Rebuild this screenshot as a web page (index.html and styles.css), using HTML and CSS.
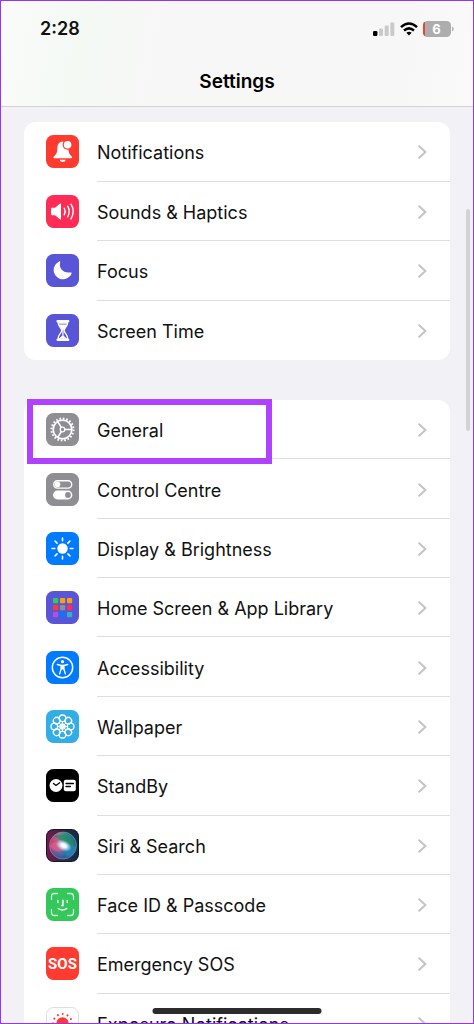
FILE: index.html
```html
<!DOCTYPE html>
<html lang="en-GB">
<head>
<meta charset="utf-8">
<meta name="viewport" content="width=device-width, initial-scale=1">
<title>Settings</title>
<link rel="stylesheet" href="styles.css">
</head>
<body>
<div class="screen">
  <header class="top">
    <div class="status">
      <time class="clock">2:28</time>
      <div class="indicators">
        <svg width="22" height="14" viewBox="0 0 22 14" role="img" aria-label="Signal"><rect x="0" y="9" width="4.4" height="5" rx="1.2" fill="#000"/><g fill="#cacaca"><rect x="6" y="6.500" width="4" height="7.500" rx="1"/><rect x="11.700" y="3.500" width="4" height="10.500" rx="1"/><rect x="17.300" y="0.500" width="4" height="13.500" rx="1"/></g></svg>
        <svg width="18" height="14" viewBox="0 0 18 14" role="img" aria-label="Wi-Fi"><g fill="none" stroke="#000" stroke-width="2.500"><path d="M1 5.200Q9-2.200 17 5.200"/><path d="M4 8.500Q9 4.200 14 8.500"/></g><path d="M6.400 10.800Q9 8.700 11.600 10.800L9 13.600Z"/></svg>
        <svg width="31" height="16" viewBox="0 0 31 16" role="img" aria-label="Battery 6 percent"><defs><clipPath id="bat"><rect width="28" height="16" rx="4.500"/></clipPath></defs><g clip-path="url(#bat)"><rect width="28" height="16" fill="#adadad"/><rect width="2" height="16" fill="#ff3b30"/></g><path d="M29 5.500q1.800 .6 1.800 2.500T29 10.500Z" fill="#b5b5b5"/><text x="13.500" y="12.500" class="battery-level">6</text></svg>
      </div>
    </div>
    <h1 class="title">Settings</h1>
  </header>
  <main class="content">
    <ul class="group group-alerts">
      <li class="row"><a class="link" href="#notifications">
        <svg class="icon" viewBox="0 0 33 33"><rect width="33" height="33" rx="7.500" fill="#ff3b30"/><path d="M17 6.500c-4 0-5.700 3-5.700 6.600 0 5-1.300 6.600-3.400 8.400-.8.700-.7 1.800.4 1.800h17c1 0 1.100-1.100.4-1.800-2-1.800-3.200-3.400-3.300-8.400Z" fill="#fff"/><circle cx="21.600" cy="9.700" r="5" fill="#ff3b30"/><circle cx="21.600" cy="9.700" r="3.800" fill="#fff"/><path d="M13.600 24.800h6.200q-.5 2.300-3.100 2.300t-3.100-2.300Z" fill="#fff"/></svg>
        <span class="label"><span class="name">Notifications</span><svg class="chevron" viewBox="0 0 9 14"><path d="M1.200 1.200 7.400 7l-6.200 5.800"/></svg></span></a></li>
      <li class="row"><a class="link" href="#sounds">
        <svg class="icon" viewBox="0 0 33 33"><rect width="33" height="33" rx="7.500" fill="#ff2d55"/><path d="M5 13.700q0-.9 1-.9h3l4.800-4q1.200-.9 1.200.5v14.400q0 1.400-1.200.5l-4.800-4H6q-1 0-1-.9Z" fill="#fff"/><g fill="none" stroke="#fff" stroke-width="1.400" stroke-linecap="round"><path d="M18.300 13.200q1.700 3.300 0 6.600M21.700 11.200q3 5.300 0 10.600M25 9.200q4.500 7.300 0 14.600"/></g></svg>
        <span class="label"><span class="name">Sounds &amp; Haptics</span><svg class="chevron" viewBox="0 0 9 14"><path d="M1.200 1.200 7.400 7l-6.200 5.800"/></svg></span></a></li>
      <li class="row"><a class="link" href="#focus">
        <svg class="icon" viewBox="0 0 33 33"><rect width="33" height="33" rx="7.500" fill="#5856d6"/><path d="M14.200 8c-1.600 5.500 2.200 11.500 10.500 10.500.7-.1 1.100.3.900.9A9.300 9.300 0 1 1 13.300 7.400c.7-.3 1.100 0 .9.600Z" fill="#fff"/></svg>
        <span class="label"><span class="name">Focus</span><svg class="chevron" viewBox="0 0 9 14"><path d="M1.200 1.200 7.400 7l-6.200 5.800"/></svg></span></a></li>
      <li class="row"><a class="link" href="#screen-time">
        <svg class="icon" viewBox="0 0 33 33"><rect width="33" height="33" rx="7.500" fill="#5856d6"/><path d="M11.500 7.200h10.800M11.500 25.800h10.800" stroke="#fff" stroke-width="2.200" stroke-linecap="round"/><path d="M12 8c0 4.800 3.700 6 3.700 8.500S12 20.200 12 25h9.800c0-4.800-3.700-6-3.700-8.500s3.700-3.700 3.700-8.500Z" fill="none" stroke="#fff" stroke-width="1.300"/><path d="M12.500 10.800h8.800c-.9 2.500-2.800 3.300-3.500 5H16c-.7-1.700-2.600-2.500-3.500-5ZM13.200 24.500l3.700-3.500 3.700 3.500ZM16.300 15h1.200v7h-1.200Z" fill="#fff"/><path d="M12.600 8h8.600v2.500h-8.600Z" fill="#fff" opacity=".75"/></svg>
        <span class="label"><span class="name">Screen Time</span><svg class="chevron" viewBox="0 0 9 14"><path d="M1.200 1.200 7.400 7l-6.200 5.800"/></svg></span></a></li>
    </ul>
    <ul class="group group-system">
      <li class="row highlighted"><a class="link" href="#general">
        <svg class="icon" viewBox="0 0 33 33"><rect width="33" height="33" rx="7.500" fill="#8e8e93"/><g fill="none" stroke="#fff"><circle cx="16.500" cy="16.500" r="11" stroke-width="2" stroke-dasharray="1.640 1.816"/><circle cx="16.500" cy="16.500" r="9.300" stroke-width="1.700"/><circle cx="16.500" cy="16.500" r="2.300" stroke-width="1.300"/><path d="M18.800 16.500h7M15.300 14.500 11.600 8.400M15.300 18.500l-3.700 6.100" stroke-width="1.500"/></g></svg>
        <span class="label"><span class="name">General</span><svg class="chevron" viewBox="0 0 9 14"><path d="M1.200 1.200 7.400 7l-6.200 5.800"/></svg></span></a></li>
      <li class="row"><a class="link" href="#control-centre">
        <svg class="icon" viewBox="0 0 33 33"><rect width="33" height="33" rx="7.500" fill="#8e8e93"/><rect x="7.700" y="7.700" width="18" height="7.400" rx="3.700" fill="none" stroke="#fff" stroke-width="1.400"/><circle cx="11.500" cy="11.400" r="2.800" fill="#fff"/><rect x="7" y="17.600" width="19.400" height="8.800" rx="4.400" fill="#fff"/><circle cx="22" cy="22" r="2.900" fill="#8e8e93"/></svg>
        <span class="label"><span class="name">Control Centre</span><svg class="chevron" viewBox="0 0 9 14"><path d="M1.200 1.200 7.400 7l-6.200 5.800"/></svg></span></a></li>
      <li class="row"><a class="link" href="#display">
        <svg class="icon" viewBox="0 0 33 33"><rect width="33" height="33" rx="7.500" fill="#007aff"/><circle cx="16.500" cy="16.500" r="5.200" fill="#fff"/><path d="M16.500 6v2.800M16.500 24.200V27M6 16.500h2.800M24.200 16.500H27M9.100 9.100l2 2M21.900 21.900l2 2M9.100 23.900l2-2M21.900 11.100l2-2" stroke="#fff" stroke-width="1.600" stroke-linecap="round"/></svg>
        <span class="label"><span class="name">Display &amp; Brightness</span><svg class="chevron" viewBox="0 0 9 14"><path d="M1.200 1.200 7.400 7l-6.200 5.800"/></svg></span></a></li>
      <li class="row"><a class="link" href="#home-screen">
        <svg class="icon" viewBox="0 0 33 33"><rect width="33" height="33" rx="7.500" fill="#5856d6"/><rect x="7" y="7" width="5.200" height="5.200" rx="1" fill="#34c759"/><rect x="14" y="7" width="5.200" height="5.200" rx="1" fill="#ff9f0a"/><rect x="21" y="7" width="5.200" height="5.200" rx="1" fill="#ff9f0a"/><rect x="7" y="14" width="5.200" height="5.200" rx="1" fill="#ff3b30"/><rect x="14" y="14" width="5.200" height="5.200" rx="1" fill="#8e8e93"/><rect x="21" y="14" width="5.200" height="5.200" rx="1" fill="#ff2d55"/><rect x="7" y="21" width="5.200" height="5.200" rx="1" fill="#af52de"/><rect x="14" y="21" width="5.200" height="5.200" rx="1" fill="#007aff"/><rect x="21" y="21" width="5.200" height="5.200" rx="1" fill="#30b0c7"/></svg>
        <span class="label"><span class="name">Home Screen &amp; App Library</span><svg class="chevron" viewBox="0 0 9 14"><path d="M1.200 1.200 7.400 7l-6.200 5.800"/></svg></span></a></li>
      <li class="row"><a class="link" href="#accessibility">
        <svg class="icon" viewBox="0 0 33 33"><rect width="33" height="33" rx="7.500" fill="#007aff"/><circle cx="16.500" cy="16.500" r="10.200" fill="none" stroke="#fff" stroke-width="1.500"/><circle cx="16.500" cy="10.700" r="1.600" fill="#fff"/><path d="M11.300 13.500l3.900 1v3.200L13.600 23M21.700 13.500l-3.900 1v3.200l1.600 5.300" fill="none" stroke="#fff" stroke-width="1.300" stroke-linecap="round" stroke-linejoin="round"/><path d="M14.700 13.800h3.600v4.700h-3.600Z" fill="#fff"/></svg>
        <span class="label"><span class="name">Accessibility</span><svg class="chevron" viewBox="0 0 9 14"><path d="M1.200 1.200 7.400 7l-6.200 5.800"/></svg></span></a></li>
      <li class="row"><a class="link" href="#wallpaper">
        <svg class="icon" viewBox="0 0 33 33"><rect width="33" height="33" rx="7.500" fill="#32ade6"/><g fill="none" stroke="#fff" stroke-width="1.300"><g id="petals"><circle cx="16.500" cy="8.300" r="3.300"/><circle cx="16.500" cy="24.700" r="3.300"/><circle cx="8.300" cy="16.500" r="3.300"/><circle cx="24.700" cy="16.500" r="3.300"/></g><use href="#petals" transform="rotate(45 16.500 16.500)"/><circle cx="16.500" cy="16.500" r="2.600"/><path d="M16.500 11.800v9.400M11.800 16.500h9.400M13.200 13.200l6.600 6.600M19.800 13.200l-6.600 6.600" stroke-width="1"/></g></svg>
        <span class="label"><span class="name">Wallpaper</span><svg class="chevron" viewBox="0 0 9 14"><path d="M1.200 1.200 7.400 7l-6.200 5.800"/></svg></span></a></li>
      <li class="row"><a class="link" href="#standby">
        <svg class="icon" viewBox="0 0 33 33"><rect width="33" height="33" rx="7.500"/><circle cx="10" cy="16.500" r="6.500" fill="#fff"/><rect x="17.800" y="10.700" width="12" height="11.600" rx="2" fill="#fff"/><path d="M7.500 14.500l2.500 2 3.600-2.800M20 14.500h7.400M20 17.500h4.500" fill="none" stroke="#000" stroke-width="1.300" stroke-linecap="round"/></svg>
        <span class="label"><span class="name">StandBy</span><svg class="chevron" viewBox="0 0 9 14"><path d="M1.200 1.200 7.400 7l-6.200 5.800"/></svg></span></a></li>
      <li class="row"><a class="link" href="#siri">
        <svg class="icon" viewBox="0 0 33 33"><defs><linearGradient id="siri-back"><stop offset="0" stop-color="#7a174c"/><stop offset=".45" stop-color="#392744"/><stop offset="1" stop-color="#102b45"/></linearGradient><linearGradient id="siri-orb" x1="0" y1=".6" x2="1" y2=".5"><stop offset="0" stop-color="#d72d69"/><stop offset=".4" stop-color="#a77690"/><stop offset=".6" stop-color="#328f85"/><stop offset="1" stop-color="#1e6c80"/></linearGradient><linearGradient id="siri-low" x2="0" y2="1"><stop offset=".5" stop-color="#2270bd" stop-opacity="0"/><stop offset="1" stop-color="#2254a3"/></linearGradient><radialGradient id="siri-glow"><stop offset="0" stop-color="#fff"/><stop offset=".35" stop-color="#eaf6ff"/><stop offset="1" stop-color="#b2e0f4" stop-opacity="0"/></radialGradient></defs><rect width="33" height="33" rx="7.500" fill="#17172a"/><rect x="1" y="1" width="31" height="31" rx="6.500" fill="url(#siri-back)"/><circle cx="17" cy="16.500" r="13.500" fill="url(#siri-orb)"/><circle cx="17" cy="16.500" r="13.500" fill="url(#siri-low)"/><path d="M8 7q16-5 21 11Q17 14 8 7Z" fill="#238a67" opacity=".7"/><path d="M4 17q3-7 13-1l3 4Q9 26 4 17Z" fill="#ed5f8c" opacity=".6"/><path d="M17 17q7-3 13 1-2 9-9 10Z" fill="#2a86c4" opacity=".6"/><circle cx="17" cy="16.500" r="13.500" fill="none" stroke="#6d9ba7" stroke-width=".7"/><ellipse cx="17.500" cy="16.800" rx="8.500" ry="5.500" transform="rotate(25 18 17)" fill="url(#siri-glow)"/></svg>
        <span class="label"><span class="name">Siri &amp; Search</span><svg class="chevron" viewBox="0 0 9 14"><path d="M1.200 1.200 7.400 7l-6.200 5.800"/></svg></span></a></li>
      <li class="row"><a class="link" href="#face-id">
        <svg class="icon" viewBox="0 0 33 33"><rect width="33" height="33" rx="7.500" fill="#34c759"/><g fill="none" stroke="#fff" stroke-linecap="round"><path d="M5.500 11.500V8.500q0-3 3-3h3M21.500 5.500h3q3 0 3 3v3M27.500 21.500v3q0 3-3 3h-3M11.500 27.500h-3q-3 0-3-3v-3" stroke-width="1.300" opacity=".8"/><path d="M11.800 12.500v2M21.300 12.500v2M16.900 12.300v5.200h-1.300M12.300 20.500q4.200 3.200 8.400 0" stroke-width="1.500"/></g></svg>
        <span class="label"><span class="name">Face ID &amp; Passcode</span><svg class="chevron" viewBox="0 0 9 14"><path d="M1.200 1.200 7.400 7l-6.200 5.800"/></svg></span></a></li>
      <li class="row"><a class="link" href="#sos">
        <svg class="icon" viewBox="0 0 33 33"><rect width="33" height="33" rx="7.500" fill="#ff3b30"/><text x="16.500" y="22" class="sos">SOS</text></svg>
        <span class="label"><span class="name">Emergency SOS</span><svg class="chevron" viewBox="0 0 9 14"><path d="M1.200 1.200 7.400 7l-6.200 5.800"/></svg></span></a></li>
      <li class="row"><a class="link" href="#exposure">
        <svg class="icon" viewBox="0 0 33 33"><rect x=".5" y=".5" width="32" height="32" rx="7" fill="#fff" stroke="#dedee0"/><circle cx="16.500" cy="16.500" r="6.200" fill="#ff3b30"/><circle cx="16.500" cy="16.500" r="9.500" fill="none" stroke="#ff3b30" stroke-width="2" stroke-linecap="round" stroke-dasharray="0.010 4.960"/></svg>
        <span class="label"><span class="name">Exposure Notifications</span><svg class="chevron" viewBox="0 0 9 14"><path d="M1.200 1.200 7.400 7l-6.200 5.800"/></svg></span></a></li>
    </ul>
  </main>
  <div class="scrollbar"></div>
  <div class="home-indicator"></div>
</div>
</body>
</html>
```
FILE: styles.css
```css
* {
  box-sizing: border-box;
}

body {
  margin: 0;
  font-family: Inter, "Liberation Sans", sans-serif;
  color: #111;
}

.screen {
  position: relative;
  height: 100vh;
  overflow: hidden;
  background: #f2f1f6;
  border: 1px solid #9333ff;
}

.top {
  background: linear-gradient(100deg, #fafbfa, #f4f9f4 18%, #f7f7f7 35%, #f7f7f7 85%, #fafafa);
  border-bottom: 1px solid #d2d2d4;
}

.status {
  display: flex;
  justify-content: space-between;
  align-items: center;
  padding: 16px 19px 0 39px;
}

.clock {
  font-size: 18px;
  line-height: 24px;
  font-weight: 600;
}

.indicators {
  display: flex;
  align-items: center;
  gap: 5px;
}

.battery-level {
  font-size: 13px;
  font-weight: 700;
  fill: #fff;
  text-anchor: middle;
}

.title {
  margin: 0;
  padding: 29px 0 12px;
  font-size: 19px;
  line-height: 24px;
  font-weight: 600;
  text-align: center;
  color: #000;
}

.content {
  display: grid;
  gap: 40px;
  padding: 15px 23px 0;
}

.group {
  display: grid;
  grid-auto-rows: 1fr;
  margin: 0;
  padding: 0;
  list-style: none;
  background: #fff;
  border-radius: 12px;
}

.group-alerts {
  min-height: 238px;
}

.group-system {
  min-height: 653px;
}

.row {
  position: relative;
  display: grid;
}

.link {
  display: flex;
  align-items: center;
  gap: 18px;
  padding-left: 22px;
  color: inherit;
  text-decoration: none;
}

.icon {
  flex: none;
  width: 33px;
  height: 33px;
}

.label {
  flex: 1;
  align-self: stretch;
  display: flex;
  align-items: center;
  justify-content: space-between;
  padding: 2px 23px 0 0;
  border-bottom: 1px solid #dededf;
  font-size: 18px;
  line-height: 24px;
  white-space: nowrap;
}

.name {
  padding-top: 2px;
}

.row:last-child .label {
  border-bottom: 0;
}

.chevron {
  width: 9px;
  height: 14px;
  fill: none;
  stroke: #c4c4c6;
  stroke-width: 2;
  stroke-linecap: round;
  stroke-linejoin: round;
}

.highlighted::after {
  content: "";
  position: absolute;
  inset: -1px 178px -5px 3px;
  border: 6px solid #b041ff;
  pointer-events: none;
}

.sos {
  font-family: "Liberation Sans Narrow", Roboto, sans-serif;
  font-size: 15px;
  font-weight: 700;
  fill: #fff;
  text-anchor: middle;
}

.scrollbar {
  position: absolute;
  top: 208px;
  right: 3px;
  width: 4px;
  height: 222px;
  border-radius: 2px;
  background: #d3d3d6;
}

.home-indicator {
  position: absolute;
  bottom: 9px;
  left: 50%;
  width: 169px;
  height: 6px;
  border-radius: 3px;
  background: #2c2c2c;
  transform: translateX(-50%);
}
```
